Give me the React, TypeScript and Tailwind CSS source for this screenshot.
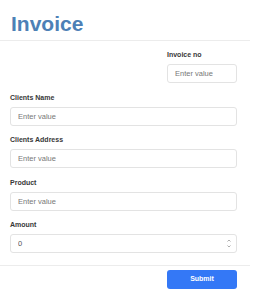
import React from "react";

const Field: React.FC<{ label: string; placeholder?: string; value?: string; className?: string; spinner?: boolean }> = ({ label, placeholder, value, className, spinner }) => {
    return (
        <div className={`flex flex-col gap-[4px] ${className ?? ""}`}>
            <label className="text-[7px] leading-[10px] font-bold text-[#383838]">{label}</label>
            <div className="relative flex">
                <input
                    readOnly
                    value={value ?? ""}
                    placeholder={placeholder}
                    className="block w-full h-[19px] px-[7px] border border-[#e3e3e3] rounded-[3px] bg-white text-[7.5px] text-[#555] placeholder:text-[#777] outline-none"
                />
                {spinner &&
                    <svg className="absolute right-[6px] top-[5px]" width="4" height="9" viewBox="0 0 4 9" fill="none" stroke="#8a8a8a" strokeWidth="0.7">
                        <path d="M0.5 2.5 L2 1 L3.5 2.5" />
                        <path d="M0.5 6.5 L2 8 L3.5 6.5" />
                    </svg>
                }
            </div>
        </div>
    )
}

const App: React.FC = () => {
    return (
        <div className="w-[260px] h-[300px] bg-white" style={{ fontFamily: '"Liberation Sans", Arial, sans-serif' }}>
            <div className="w-[250px]">
                <div className="pt-[12px] pb-[4px] pl-[11px] border-b border-[#ececec]">
                    <h1 className="text-[21px] leading-[24px] font-bold text-[#4d80b6]">Invoice</h1>
                </div>

                <div className="pl-[10px] pr-[13px] pt-[9px] pb-[12px] flex flex-col gap-[9.5px] border-b border-[#ececec]">
                    <div className="flex justify-end">
                        <Field label="Invoice no" placeholder="Enter value" className="w-[70px]" />
                    </div>
                    <Field label="Clients Name" placeholder="Enter value" />
                    <Field label="Clients Address" placeholder="Enter value" />
                    <Field label="Product" placeholder="Enter value" />
                    <Field label="Amount" value="0" spinner />
                </div>

                <div className="pl-[10px] pr-[13px] pt-[4px] flex justify-end">
                    <button className="w-[70px] h-[19px] rounded-[3px] bg-[#3478f6] text-white text-[7px] font-bold">Submit</button>
                </div>
            </div>
        </div>
    )
}

export default App
